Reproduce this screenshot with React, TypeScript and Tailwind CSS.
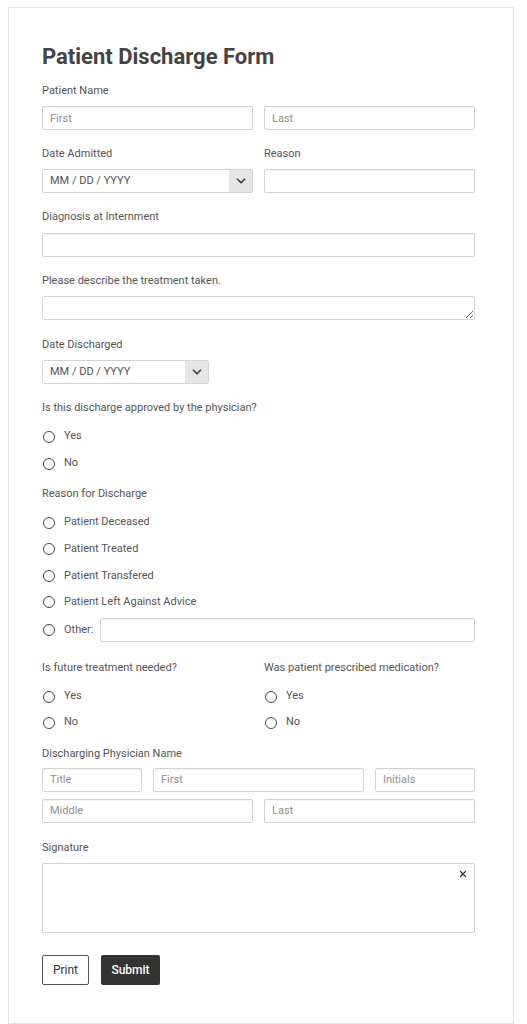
import { ChevronDown, X } from "lucide-react";

const input =
  "h-[24px] rounded-[2px] border border-[#d2d2d2] bg-white px-[7px] text-[11px] text-[#555] placeholder:text-[#8f8f8f] outline-none shadow-[inset_0_1px_1px_rgba(0,0,0,0.04)]";

function Label({ children }: { children: React.ReactNode }) {
  return <div className="h-[16px] text-[11px] leading-[16px] text-[#555]">{children}</div>;
}

function Radio({ label, h = "h-[27px]" }: { label: string; h?: string }) {
  return (
    <div className={`flex items-center gap-[9px] pl-[1px] ${h}`}>
      <span className="h-[12px] w-[12px] rounded-full border-[1.5px] border-[#444]" />
      <span className="text-[11px] text-[#555]">{label}</span>
    </div>
  );
}

function DateSelect({ width }: { width: string }) {
  return (
    <div className={`flex h-[24px] overflow-hidden rounded-[2px] border border-[#d2d2d2] ${width}`}>
      <div className="flex flex-1 items-center pl-[7px] text-[11px] text-[#555]">MM / DD / YYYY</div>
      <div className="flex w-[23px] items-center justify-center bg-[#e6e6e6]">
        <ChevronDown size={14} strokeWidth={3} className="text-[#444]" />
      </div>
    </div>
  );
}

export default function App() {
  return (
    <div className="min-h-screen bg-white pt-[7px] pl-[8px] font-['Roboto',sans-serif]">
      <div className="w-[506px] border border-[#e2e2e2] pl-[33px] pr-[38px] pt-[35px] pb-[38px]">
        <h1 className="text-[22px] font-bold leading-[28px] text-[#444]">Patient Discharge Form</h1>

        {/* Patient name */}
        <div className="mt-[12px]">
          <Label>Patient Name</Label>
          <div className="mt-[7px] grid grid-cols-2 gap-[11px]">
            <input className={input} placeholder="First" />
            <input className={input} placeholder="Last" />
          </div>
        </div>

        {/* Date admitted / reason */}
        <div className="mt-[16px] grid grid-cols-2 gap-x-[11px]">
          <div>
            <Label>Date Admitted</Label>
            <div className="mt-[7px]">
              <DateSelect width="w-full" />
            </div>
          </div>
          <div>
            <Label>Reason</Label>
            <input className={`${input} mt-[7px] w-full`} />
          </div>
        </div>

        <div className="mt-[16px]">
          <Label>Diagnosis at Internment</Label>
          <input className={`${input} mt-[8px] w-full`} />
        </div>

        <div className="mt-[16px]">
          <Label>Please describe the treatment taken.</Label>
          <textarea className="mt-[7px] block h-[24px] min-h-[24px] w-full rounded-[2px] border border-[#d2d2d2] px-[7px] text-[11px] outline-none" />
        </div>

        <div className="mt-[17px]">
          <Label>Date Discharged</Label>
          <div className="mt-[7px]">
            <DateSelect width="w-[167px]" />
          </div>
        </div>

        <div className="mt-[16px]">
          <Label>Is this discharge approved by the physician?</Label>
          <div className="mt-[7px]">
            <Radio label="Yes" />
            <Radio label="No" />
          </div>
        </div>

        <div className="mt-[9px]">
          <Label>Reason for Discharge</Label>
          <div className="mt-[7px]">
            <Radio label="Patient Deceased" />
            <Radio label="Patient Treated" h="h-[26.5px]" />
            <Radio label="Patient Transfered" h="h-[26.5px]" />
            <Radio label="Patient Left Against Advice" h="h-[26.5px]" />
            <div className="mt-[1px] flex h-[27px] items-center gap-[9px] pl-[1px]">
              <span className="h-[12px] w-[12px] shrink-0 rounded-full border-[1.5px] border-[#444]" />
              <span className="text-[11px] text-[#555]">Other:</span>
              <input className={`${input} ml-[-2px] flex-1`} />
            </div>
          </div>
        </div>

        <div className="mt-[16px] grid grid-cols-2 gap-x-[11px]">
          <div>
            <Label>Is future treatment needed?</Label>
            <div className="mt-[8px]">
              <Radio label="Yes" h="h-[26px]" />
              <Radio label="No" h="h-[26px]" />
            </div>
          </div>
          <div>
            <Label>Was patient prescribed medication?</Label>
            <div className="mt-[8px]">
              <Radio label="Yes" h="h-[26px]" />
              <Radio label="No" h="h-[26px]" />
            </div>
          </div>
        </div>

        <div className="mt-[10px]">
          <Label>Discharging Physician Name</Label>
          <div className="mt-[6px] flex gap-[11px]">
            <input className={`${input} w-[100px]`} placeholder="Title" />
            <input className={`${input} min-w-0 flex-1`} placeholder="First" />
            <input className={`${input} w-[100px]`} placeholder="Initials" />
          </div>
          <div className="mt-[7px] grid grid-cols-2 gap-[11px]">
            <input className={input} placeholder="Middle" />
            <input className={input} placeholder="Last" />
          </div>
        </div>

        <div className="mt-[17px]">
          <Label>Signature</Label>
          <div className="relative mt-[7px] h-[70px] rounded-[2px] border border-[#d2d2d2]">
            <X size={10} strokeWidth={3} className="absolute right-[6px] top-[5px] text-[#333]" />
          </div>
        </div>

        <div className="mt-[22px] flex gap-[12px]">
          <button className="h-[30px] w-[47px] rounded-[2px] border border-[#555] bg-white text-[12px] text-[#333]">
            Print
          </button>
          <button className="h-[30px] w-[59px] rounded-[2px] bg-[#333] text-[12px] font-medium text-white">
            Submit
          </button>
        </div>
      </div>
    </div>
  );
}
